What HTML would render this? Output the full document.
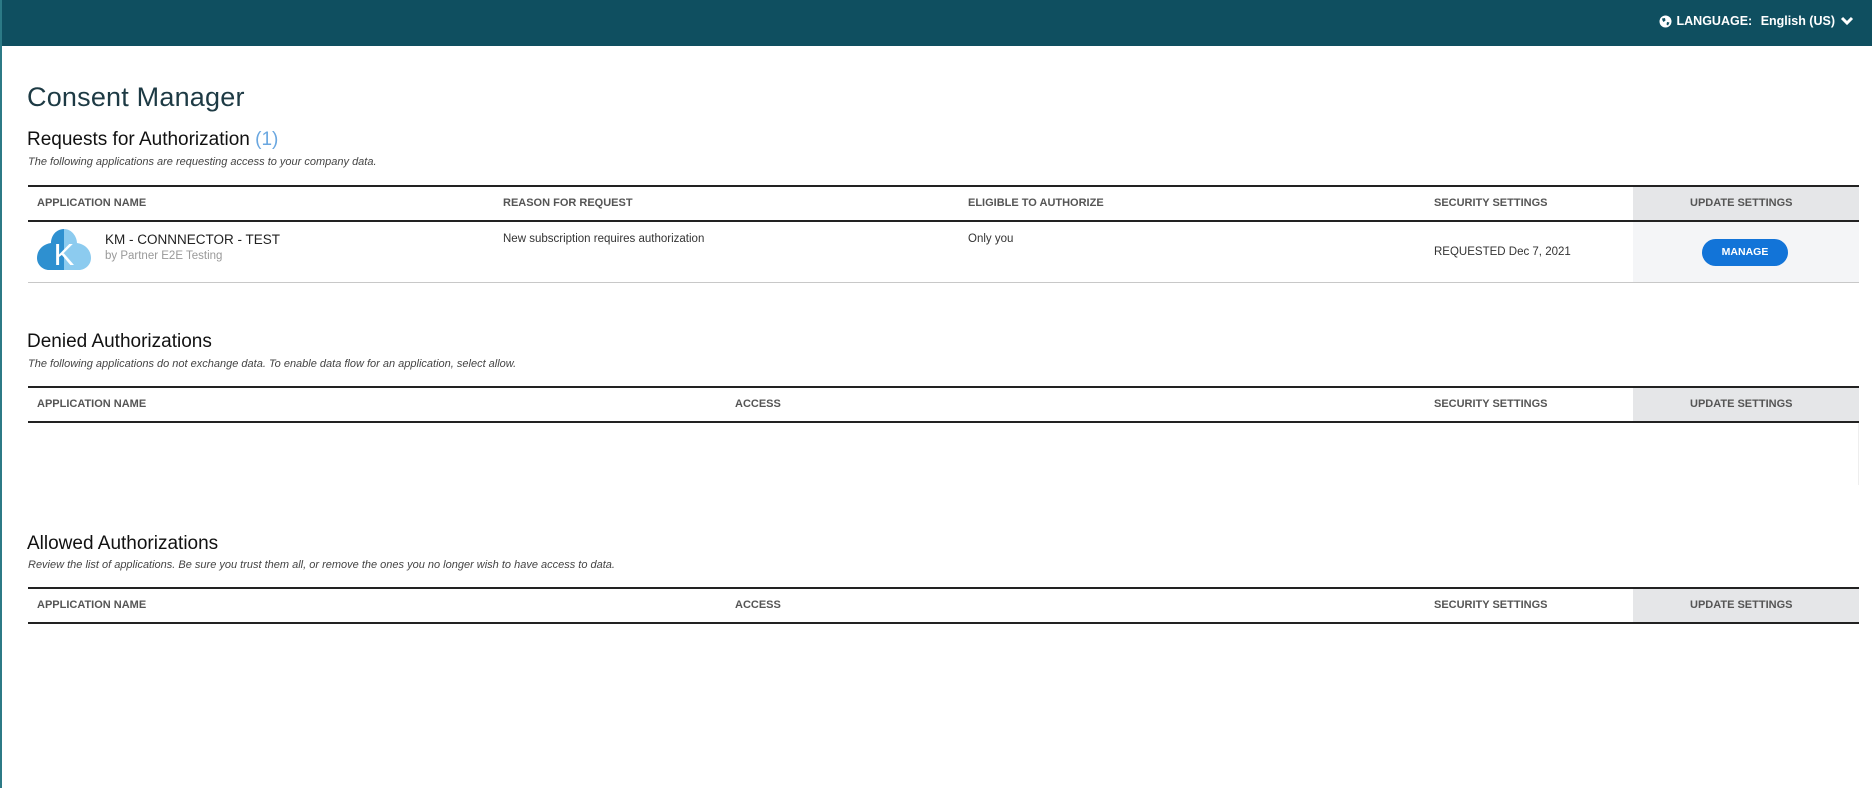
<!DOCTYPE html>
<html><head><meta charset="utf-8"><style>
*{margin:0;padding:0;box-sizing:border-box}
body{width:1872px;height:788px;background:#fff;font-family:"Liberation Sans",sans-serif;color:#222;position:relative;overflow:hidden}
.edge{position:absolute;left:0;top:0;width:2px;height:788px;background:#2c7a86}
.top{position:absolute;left:0;top:0;width:1872px;height:46px;background:#0f4f60}
.lang{position:absolute;right:18px;top:14px;color:#fff;font-size:12.5px;font-weight:bold;display:flex;align-items:center;gap:5px}
.abs{position:absolute}
h1{position:absolute;left:27px;top:82px;font-size:27px;font-weight:normal;color:#1d3a44;letter-spacing:0.2px}
.h2{position:absolute;left:27px;font-size:19px;color:#111}
.sub{position:absolute;left:28px;font-size:11px;font-style:italic;color:#444}
.th{position:absolute;font-size:11px;color:#555;font-weight:bold;text-transform:uppercase}
.line{position:absolute;left:28px;width:1831px;height:2px;background:#222}
.gray{position:absolute;left:1633px;width:226px;background:#e5e6e8}
</style></head><body>
<div class="top"></div>
<div class="edge"></div>
<div class="lang"><svg width="13" height="13" viewBox="0 0 13 13"><circle cx="6.5" cy="6.5" r="6" fill="#fff"/><path d="M3 3.5 L6 3 L6.5 5.5 L4.5 7 L3.5 5.5Z M8 7 L10.5 7.5 L9 10.5 L7.5 9.5Z" fill="#0f4f60"/></svg><span>LANGUAGE:&nbsp;</span><span>English (US)</span><svg width="14" height="10" viewBox="0 0 14 10"><path d="M2 2 L7 7 L12 2" stroke="#fff" stroke-width="3" fill="none"/></svg></div>

<h1>Consent Manager</h1>
<div class="h2" style="top:129px">Requests for Authorization <span style="color:#6aa7e0">(1)</span></div>
<div class="sub" style="top:156px">The following applications are requesting access to your company data.</div>

<div class="gray" style="top:185px;height:36px"></div>
<div class="gray" style="top:221px;height:62px;background:#f4f5f7"></div>
<div class="line" style="top:185px"></div>
<div class="line" style="top:220px"></div>
<div class="abs" style="left:28px;top:282px;width:1831px;height:1px;background:#c8c8c8"></div>
<div class="th" style="left:37px;top:197px">Application Name</div>
<div class="th" style="left:503px;top:197px">Reason for Request</div>
<div class="th" style="left:968px;top:197px">Eligible to Authorize</div>
<div class="th" style="left:1434px;top:197px">Security Settings</div>
<div class="th" style="left:1690px;top:197px">Update Settings</div>

<svg class="abs" style="left:36px;top:227px" width="56" height="44" viewBox="0 0 56 44">
<path d="M28 2 C20 2 15 9 15 16 C7 17 1 23 1 31 C1 38 7 43 13 43 L28 43Z" fill="#2e90d0"/>
<path d="M28 2 C36 2 41 10 41 16 C49 17 55 23 55 31 C55 38 49 43 43 43 L28 43Z" fill="#8ccbef"/>
<text x="28" y="38" font-family="Liberation Sans" font-size="31" fill="#fff" text-anchor="middle">K</text>
</svg>
<div class="abs" style="left:105px;top:232px;font-size:13.5px;color:#222">KM - CONNNECTOR - TEST</div>
<div class="abs" style="left:105px;top:250px;font-size:11.5px;color:#999">by Partner E2E Testing</div>
<div class="abs" style="left:503px;top:233px;font-size:11.5px;color:#333">New subscription requires authorization</div>
<div class="abs" style="left:968px;top:233px;font-size:11.5px;color:#333">Only you</div>
<div class="abs" style="left:1434px;top:246px;font-size:11.5px;color:#333">REQUESTED Dec 7, 2021</div>
<div class="abs" style="left:1702px;top:239px;width:86px;height:27px;border-radius:14px;background:#1274d8;color:#fff;font-size:10.5px;font-weight:bold;text-align:center;line-height:27px">MANAGE</div>

<div class="h2" style="top:331px">Denied Authorizations</div>
<div class="sub" style="top:358px">The following applications do not exchange data. To enable data flow for an application, select allow.</div>
<div class="gray" style="top:386px;height:35px"></div>
<div class="line" style="top:386px"></div>
<div class="line" style="top:421px"></div>
<div class="abs" style="left:1858px;top:423px;width:1px;height:62px;background:#eee"></div>
<div class="th" style="left:37px;top:398px">Application Name</div>
<div class="th" style="left:735px;top:398px">Access</div>
<div class="th" style="left:1434px;top:398px">Security Settings</div>
<div class="th" style="left:1690px;top:398px">Update Settings</div>

<div class="h2" style="top:533px">Allowed Authorizations</div>
<div class="sub" style="top:559px">Review the list of applications. Be sure you trust them all, or remove the ones you no longer wish to have access to data.</div>
<div class="gray" style="top:587px;height:36px"></div>
<div class="line" style="top:587px"></div>
<div class="line" style="top:622px"></div>
<div class="th" style="left:37px;top:599px">Application Name</div>
<div class="th" style="left:735px;top:599px">Access</div>
<div class="th" style="left:1434px;top:599px">Security Settings</div>
<div class="th" style="left:1690px;top:599px">Update Settings</div>
</body></html>
